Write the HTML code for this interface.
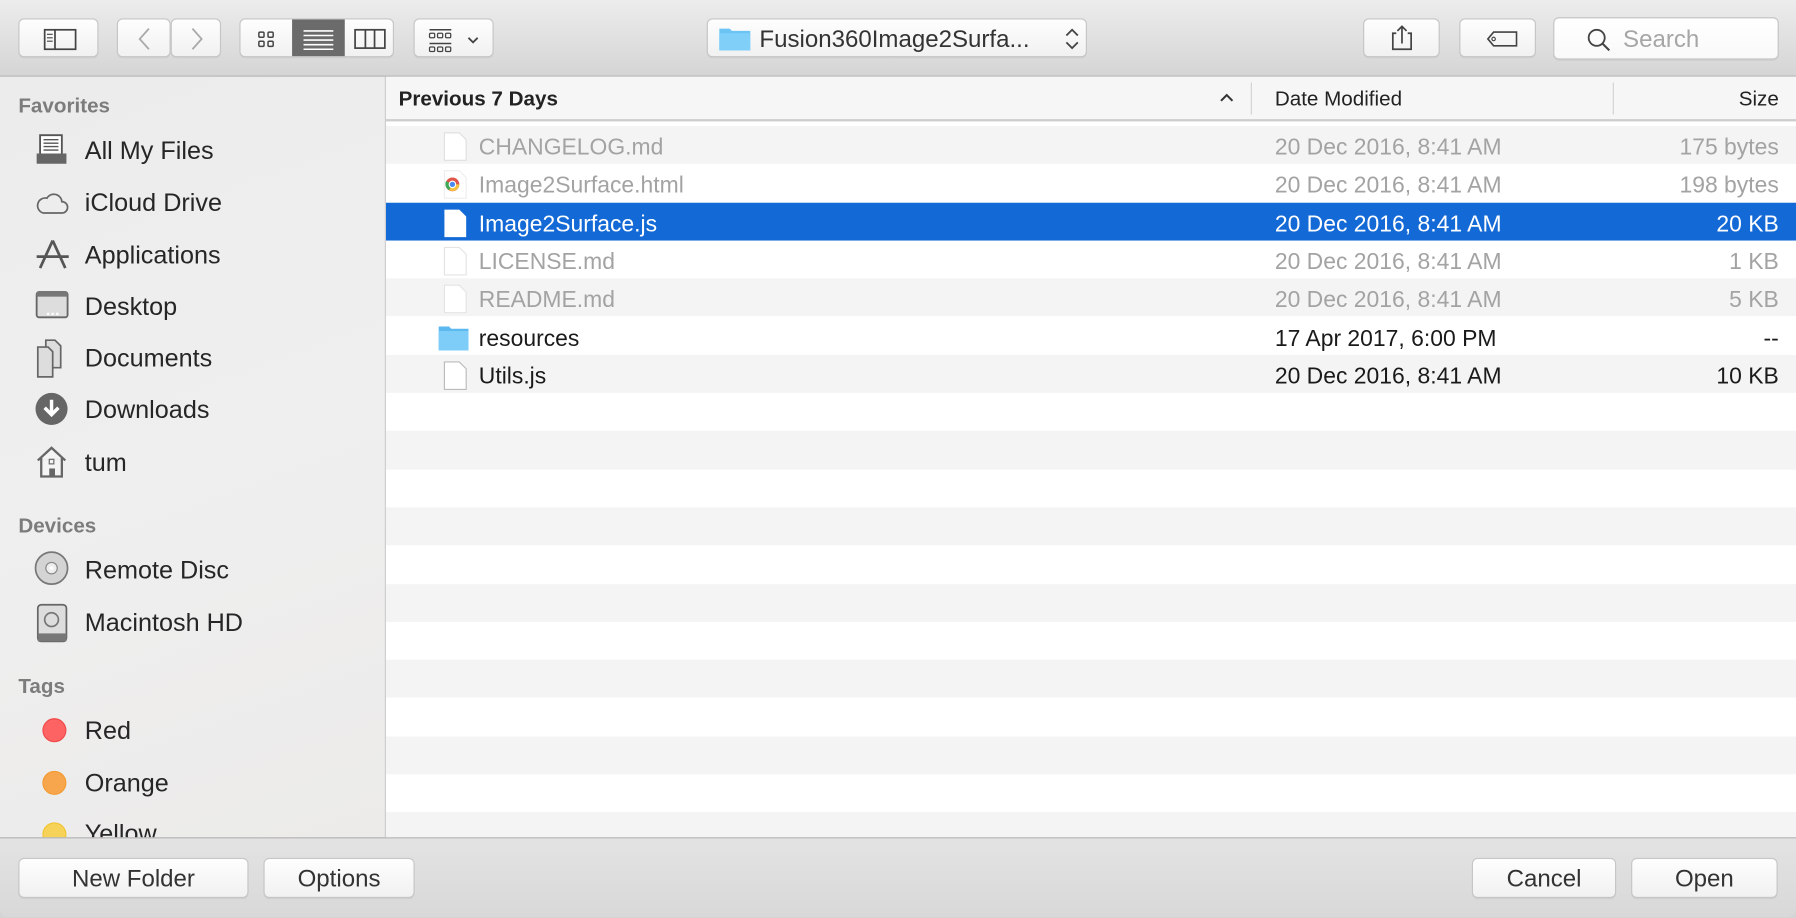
<!DOCTYPE html>
<html><head><meta charset="utf-8"><style>
html,body{margin:0;padding:0;width:1796px;height:918px;overflow:hidden;background:#d4d4d4}
#w{position:absolute;left:0;top:0;width:1568px;height:801px;transform:scale(1.14541);transform-origin:0 0;font-family:"Liberation Sans",sans-serif;overflow:hidden;border-radius:0 0 8px 8px}
.abs{position:absolute}
#tb{left:0;top:0;width:1568px;height:66px;background:linear-gradient(#ececec,#d5d5d5);border-bottom:1px solid #b3b3b3}
.btn{position:absolute;background:linear-gradient(#fefefe,#f1f1f1);border:1px solid #c6c6c6;border-radius:5px;box-sizing:border-box;box-shadow:0 1px 0 rgba(0,0,0,.05)}
#sb{left:0;top:67px;width:336px;height:664px;background:linear-gradient(160deg,#ececec,#efefef 50%,#ecebea);border-right:1px solid #cfcfcf;overflow:hidden}
.sh{position:absolute;left:16px;font-size:18px;color:#7c7c7c;font-weight:bold}
.si{position:absolute;left:74px;font-size:22px;color:#262626}
.ic{position:absolute;left:30px}
#main{left:337px;top:67px;width:1231px;height:664px;background:#fff;overflow:hidden}
#hd{left:0;top:0;width:1231px;height:37px;background:#f6f6f6;border-bottom:2px solid #cdcdcd;font-size:18px;color:#222}
.row{position:absolute;left:0;width:1231px;height:33.3px;font-size:20px;line-height:33.3px;color:#a3a3a3}
.g{background:#f4f4f4}
.row span{top:3px}
.row .n{position:absolute;left:81px}
.row .d{position:absolute;left:776px}
.row .s{position:absolute;right:15px}
.row svg{position:absolute;left:50px;top:5px}
#bb{left:0;top:731px;width:1568px;height:70px;background:linear-gradient(#e3e3e3,#d8d8d8);border-top:1px solid #b3b3b3}
.bt{font-size:21px;color:#333;text-align:center;line-height:36px}
</style></head><body><div id="w">
<div id="tb" class="abs">
 <div class="btn" style="left:16px;top:16px;width:70px;height:34px"><svg width="70" height="34"><rect x="22" y="9" width="27" height="17" fill="none" stroke="#444" stroke-width="1.5"/><line x1="31" y1="9" x2="31" y2="26" stroke="#444" stroke-width="1.5"/><path d="M24 13h5M24 16h5M24 19h5" stroke="#444"/></svg></div>
 <div class="btn" style="left:102px;top:16px;width:47px;height:34px"><svg width="47" height="34"><path d="M27 8l-8 9 8 9" fill="none" stroke="#aaa" stroke-width="1.6"/></svg></div>
 <div class="btn" style="left:149px;top:16px;width:44px;height:34px"><svg width="44" height="34"><path d="M18 8l8 9-8 9" fill="none" stroke="#aaa" stroke-width="1.6"/></svg></div>
 <div class="btn" style="left:209px;top:16px;width:135px;height:34px;overflow:hidden">
  <svg width="135" height="34" style="position:absolute;left:0;top:0"><rect x="45" y="0" width="46" height="34" fill="#6b6b6b"/>
  <g fill="none" stroke="#444" stroke-width="1.3"><rect x="16" y="11" width="4.5" height="4.5" rx="1"/><rect x="24" y="11" width="4.5" height="4.5" rx="1"/><rect x="16" y="19" width="4.5" height="4.5" rx="1"/><rect x="24" y="19" width="4.5" height="4.5" rx="1"/></g>
  <path d="M55 10h26M55 14h26M55 18h26M55 22h26M55 26h26" stroke="#fff" stroke-width="1.4"/>
  <g fill="none" stroke="#444" stroke-width="1.5"><rect x="100" y="9" width="26" height="16"/><line x1="109" y1="9" x2="109" y2="25"/><line x1="117" y1="9" x2="117" y2="25"/></g></svg></div>
 <div class="btn" style="left:361px;top:16px;width:70px;height:34px"><svg width="70" height="34"><path d="M13 9h19M13 21h19" stroke="#444" stroke-width="1.3"/><g fill="none" stroke="#444" stroke-width="1.1"><rect x="13" y="12" width="4.5" height="4" rx="1"/><rect x="20" y="12" width="4.5" height="4" rx="1"/><rect x="27" y="12" width="4.5" height="4" rx="1"/><rect x="13" y="24" width="4.5" height="4" rx="1"/><rect x="20" y="24" width="4.5" height="4" rx="1"/><rect x="27" y="24" width="4.5" height="4" rx="1"/></g><path d="M47 16l4 4 4-4" fill="none" stroke="#444" stroke-width="1.6"/></svg></div>
 <div class="btn" style="left:617px;top:16px;width:332px;height:34px">
  <svg width="30" height="24" style="position:absolute;left:9px;top:5px"><path d="M1 3h9l2 2h16v17H1z" fill="#6cc4f5"/><rect x="1" y="7" width="27" height="15" fill="#80cff8"/></svg>
  <div class="abs" style="left:45px;top:6px;font-size:21px;color:#333">Fusion360Image2Surfa...</div>
  <svg width="14" height="24" style="position:absolute;left:311px;top:5px"><path d="M2 9l5-5 5 5M2 15l5 5 5-5" fill="none" stroke="#444" stroke-width="1.6"/></svg></div>
 <div class="btn" style="left:1190px;top:16px;width:67px;height:34px"><svg width="67" height="34"><path d="M28 12h-3v14h16V12h-3M33 21V6M29 10l4-4 4 4" fill="none" stroke="#444" stroke-width="1.5"/></svg></div>
 <div class="btn" style="left:1274px;top:16px;width:67px;height:34px"><svg width="67" height="34"><path d="M24 17l5-6h20v12H29z" fill="none" stroke="#444" stroke-width="1.4"/><circle cx="29" cy="17" r="1.5" fill="none" stroke="#444"/></svg></div>
 <div class="btn" style="left:1356px;top:15px;width:197px;height:37px;background:linear-gradient(#fff,#f9f9f9)"><svg width="30" height="30" style="position:absolute;left:25px;top:6px"><circle cx="12" cy="11" r="7" fill="none" stroke="#444" stroke-width="1.6"/><path d="M17 16l6 6" stroke="#444" stroke-width="1.8"/></svg><div class="abs" style="left:60px;top:7px;font-size:21px;color:#a6a6a6">Search</div></div>
</div>

<div id="sb" class="abs">
 <div class="sh" style="top:15px">Favorites</div>
 <svg class="ic" style="top:49px" width="30" height="30"><path d="M5 2h19v18H5z" fill="#fff" stroke="#555" stroke-width="1.6"/><path d="M8 6h13M8 9h13M8 12h13M8 15h13" stroke="#555" stroke-width="1.2"/><path d="M2 18h26v9H2z" fill="#666"/></svg>
 <div class="si" style="top:52px">All My Files</div>
 <svg class="ic" style="top:95px" width="30" height="30"><path d="M8 24h16a5 5 0 0 0 0-10 7 7 0 0 0-13-3 6 6 0 0 0-3 13z" fill="none" stroke="#666" stroke-width="1.5"/></svg>
 <div class="si" style="top:97px">iCloud Drive</div>
 <svg class="ic" style="top:139px" width="32" height="32"><path d="M5 28L16 4M27 28L16 4M2 18h28" stroke="#555" stroke-width="2.4" fill="none"/></svg>
 <div class="si" style="top:143px">Applications</div>
 <svg class="ic" style="top:185px" width="32" height="30"><rect x="2" y="3" width="27" height="22" rx="2" fill="#ddd" stroke="#666" stroke-width="1.6"/><rect x="2" y="3" width="27" height="4" fill="#777"/><path d="M11 22h2M15 22h2M19 22h2" stroke="#fff" stroke-width="2"/></svg>
 <div class="si" style="top:188px">Desktop</div>
 <svg class="ic" style="top:228px" width="32" height="36"><path d="M10 2h8l5 5v19H10z" fill="#ddd" stroke="#666" stroke-width="1.5"/><path d="M3 8h9l4 4v22H3z" fill="#ddd" stroke="#666" stroke-width="1.5"/></svg>
 <div class="si" style="top:233px">Documents</div>
 <svg class="ic" style="top:275px" width="32" height="32"><circle cx="15" cy="15" r="14" fill="#666"/><path d="M15 7v12M9 14l6 6 6-6" stroke="#fff" stroke-width="3" fill="none"/></svg>
 <div class="si" style="top:278px">Downloads</div>
 <svg class="ic" style="top:320px" width="32" height="32"><path d="M3 15L15 4l12 11M6 13v16h18V13" fill="#f4f4f4" stroke="#666" stroke-width="2"/><rect x="13" y="22" width="5" height="7" fill="#666"/><rect x="13" y="14" width="4" height="4" fill="none" stroke="#666"/></svg>
 <div class="si" style="top:324px">tum</div>
 <div class="sh" style="top:382px">Devices</div>
 <svg class="ic" style="top:414px" width="32" height="32"><circle cx="15" cy="15" r="14" fill="#d4d4d4" stroke="#777" stroke-width="1.5"/><circle cx="15" cy="15" r="5" fill="#eee" stroke="#888"/><circle cx="15" cy="15" r="1.5" fill="#fff"/></svg>
 <div class="si" style="top:418px">Remote Disc</div>
 <svg class="ic" style="top:459px" width="32" height="36"><rect x="3" y="2" width="25" height="32" rx="3" fill="#ddd" stroke="#666" stroke-width="1.5"/><circle cx="15" cy="15" r="6" fill="none" stroke="#777" stroke-width="1.5"/><rect x="3" y="27" width="25" height="7" fill="#777"/></svg>
 <div class="si" style="top:464px">Macintosh HD</div>
 <div class="sh" style="top:522px">Tags</div>
 <div class="abs" style="left:37px;top:560px;width:19px;height:19px;border-radius:50%;background:#fe6363;border:1px solid #f04848"></div>
 <div class="si" style="top:558px">Red</div>
 <div class="abs" style="left:37px;top:606px;width:19px;height:19px;border-radius:50%;background:#f7a64e;border:1px solid #f39a2e"></div>
 <div class="si" style="top:604px">Orange</div>
 <div class="abs" style="left:37px;top:651px;width:19px;height:19px;border-radius:50%;background:#f7d258;border:1px solid #f0c430"></div>
 <div class="si" style="top:648px">Yellow</div>
</div>

<div id="main" class="abs">
 <div id="hd" class="abs">
  <div class="abs" style="left:11px;top:9px;font-weight:bold;font-size:18px">Previous 7 Days</div>
  <svg class="abs" style="left:727px;top:12px" width="14" height="12"><path d="M2 9l5-5 5 5" fill="none" stroke="#333" stroke-width="1.8"/></svg>
  <div class="abs" style="left:755px;top:5px;width:1px;height:28px;background:#d2d2d2"></div>
  <div class="abs" style="left:776px;top:9px">Date Modified</div>
  <div class="abs" style="left:1071px;top:5px;width:1px;height:28px;background:#d2d2d2"></div>
  <div class="abs" style="right:15px;top:9px">Size</div>
 </div>
 <div class="row g" style="top:43px"><svg width="22" height="26"><path d="M1 1h13l6 6v18H1z" fill="#fff" stroke="#e0e0e0"/></svg><span class="n">CHANGELOG.md</span><span class="d">20 Dec 2016, 8:41 AM</span><span class="s">175 bytes</span></div>
 <div class="row" style="top:76.3px"><svg width="22" height="26"><path d="M1 1h13l6 6v18H1z" fill="#fff" stroke="#eee"/><circle cx="8" cy="13" r="6" fill="#e0544a"/><path d="M8 13L14 13A6 6 0 0 1 5 18z" fill="#f4c23e"/><path d="M8 13L5 18A6 6 0 0 1 2.5 10z" fill="#3ea856"/><circle cx="8" cy="13" r="2.8" fill="#4a8af0" stroke="#fff"/></svg><span class="n">Image2Surface.html</span><span class="d">20 Dec 2016, 8:41 AM</span><span class="s">198 bytes</span></div>
 <div class="row" style="top:109.6px;background:#1369d6;color:#fff"><svg width="22" height="26"><path d="M1 1h13l6 6v18H1z" fill="#fff"/></svg><span class="n">Image2Surface.js</span><span class="d">20 Dec 2016, 8:41 AM</span><span class="s">20 KB</span></div>
 <div class="row" style="top:142.9px"><svg width="22" height="26"><path d="M1 1h13l6 6v18H1z" fill="#fff" stroke="#e4e4e4"/></svg><span class="n">LICENSE.md</span><span class="d">20 Dec 2016, 8:41 AM</span><span class="s">1 KB</span></div>
 <div class="row g" style="top:176.2px"><svg width="22" height="26"><path d="M1 1h13l6 6v18H1z" fill="#fff" stroke="#e4e4e4"/></svg><span class="n">README.md</span><span class="d">20 Dec 2016, 8:41 AM</span><span class="s">5 KB</span></div>
 <div class="row" style="top:209.5px;color:#1a1a1a"><svg width="30" height="26" style="left:45px"><path d="M1 3h9l2 2h15v19H1z" fill="#5cb9f0"/><rect x="1" y="7" width="26" height="17" rx="1" fill="#7dcdf8"/></svg><span class="n">resources</span><span class="d">17 Apr 2017, 6:00 PM</span><span class="s">--</span></div>
 <div class="row g" style="top:242.8px;color:#1a1a1a"><svg width="22" height="26"><path d="M1 1h13l6 6v18H1z" fill="#fff" stroke="#bbb"/></svg><span class="n">Utils.js</span><span class="d">20 Dec 2016, 8:41 AM</span><span class="s">10 KB</span></div>
 <div class="row g" style="top:309.4px"></div>
 <div class="row g" style="top:376px"></div>
 <div class="row g" style="top:442.6px"></div>
 <div class="row g" style="top:509.2px"></div>
 <div class="row g" style="top:575.8px"></div>
 <div class="row g" style="top:642.4px"></div>
</div>

<div id="bb" class="abs">
 <div class="btn bt" style="left:16px;top:17px;width:201px;height:35px">New Folder</div>
 <div class="btn bt" style="left:230px;top:17px;width:132px;height:35px">Options</div>
 <div class="btn bt" style="left:1285px;top:17px;width:126px;height:35px">Cancel</div>
 <div class="btn bt" style="left:1424px;top:17px;width:128px;height:35px">Open</div>
</div>
</div></body></html>
